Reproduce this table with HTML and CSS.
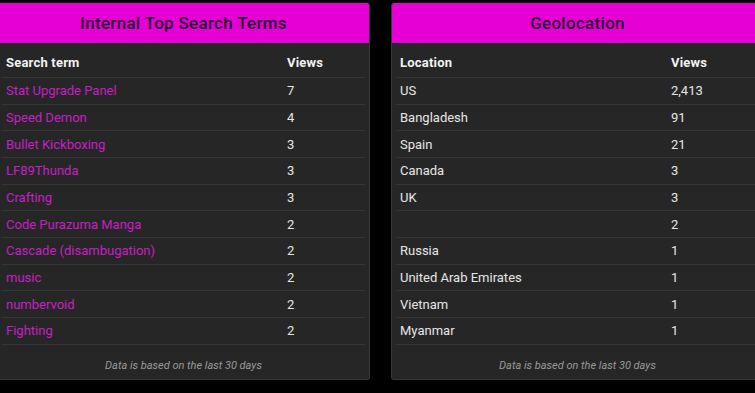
FILE: index.html
```html
<!DOCTYPE html>
<html lang="en">
<head>
<meta charset="utf-8">
<title>Stats</title>
<link rel="stylesheet" href="styles.css">
</head>
<body>
<div class="board">
  <section class="panel">
    <h2 class="panel-title">Internal Top Search Terms</h2>
    <table class="stats stats-terms">
      <thead>
        <tr><th class="c1">Search term</th><th>Views</th></tr>
      </thead>
      <tbody>
        <tr><td><a href="#">Stat Upgrade Panel</a></td><td>7</td></tr>
        <tr><td><a href="#">Speed Demon</a></td><td>4</td></tr>
        <tr><td><a href="#">Bullet Kickboxing</a></td><td>3</td></tr>
        <tr><td><a href="#">LF89Thunda</a></td><td>3</td></tr>
        <tr><td><a href="#">Crafting</a></td><td>3</td></tr>
        <tr><td><a href="#">Code Purazuma Manga</a></td><td>2</td></tr>
        <tr><td><a href="#">Cascade (disambugation)</a></td><td>2</td></tr>
        <tr><td><a href="#">music</a></td><td>2</td></tr>
        <tr><td><a href="#">numbervoid</a></td><td>2</td></tr>
        <tr><td><a href="#">Fighting</a></td><td>2</td></tr>
      </tbody>
    </table>
    <p class="note">Data is based on the last 30 days</p>
  </section>
  <section class="panel">
    <h2 class="panel-title">Geolocation</h2>
    <table class="stats stats-geo">
      <thead>
        <tr><th class="c1">Location</th><th>Views</th></tr>
      </thead>
      <tbody>
        <tr><td>US</td><td>2,413</td></tr>
        <tr><td>Bangladesh</td><td>91</td></tr>
        <tr><td>Spain</td><td>21</td></tr>
        <tr><td>Canada</td><td>3</td></tr>
        <tr><td>UK</td><td>3</td></tr>
        <tr><td></td><td>2</td></tr>
        <tr><td>Russia</td><td>1</td></tr>
        <tr><td>United Arab Emirates</td><td>1</td></tr>
        <tr><td>Vietnam</td><td>1</td></tr>
        <tr><td>Myanmar</td><td>1</td></tr>
      </tbody>
    </table>
    <p class="note">Data is based on the last 30 days</p>
  </section>
</div>
</body>
</html>
```
FILE: styles.css
```css
html, body {
  margin: 0;
  padding: 0;
  background: #000;
  overflow: hidden;
}
body {
  font-family: Roboto, "Liberation Sans", sans-serif;
  color: #e6e6e6;
  width: 755px;
  height: 393px;
}
.board {
  display: flex;
  gap: 21px;
  padding-top: 3px;
  margin-left: -3px;
}
.panel {
  flex: 0 0 373px;
  width: 373px;
  height: 377px;
  box-sizing: border-box;
  background: #262626;
  border: 1px solid #383838;
  border-top: 0;
  border-radius: 3px;
  overflow: hidden;
  display: flex;
  flex-direction: column;
}
.panel-title {
  margin: 0;
  height: 40px;
  display: flex;
  align-items: center;
  justify-content: center;
  background: #e600d6;
  color: #24062a;
  font-size: 17px;
  font-weight: 500;
  letter-spacing: 0.3px;
}
.stats {
  margin: 0 4px 0 4px;
  border-collapse: collapse;
  font-size: 13px;
}
.stats th, .stats td {
  text-align: left;
  padding: 0 0 0 4px;
  border-bottom: 1px solid #353535;
}
.stats th {
  height: 30px;
  font-weight: 700;
  color: #f2f2f2;
  padding-top: 4px;
  letter-spacing: 0.2px;
}
.stats td {
  height: 25.67px;
}
.stats-terms .c1 { width: 277px; }
.stats-geo .c1 { width: 267px; }
.stats a {
  color: #c81ec6;
  text-decoration: none;
}
.note {
  margin: 0;
  flex: 1;
  display: flex;
  align-items: center;
  justify-content: center;
  padding-top: 8px;
  font-size: 11px;
  font-style: italic;
  color: #9a9a9a;
}
```
